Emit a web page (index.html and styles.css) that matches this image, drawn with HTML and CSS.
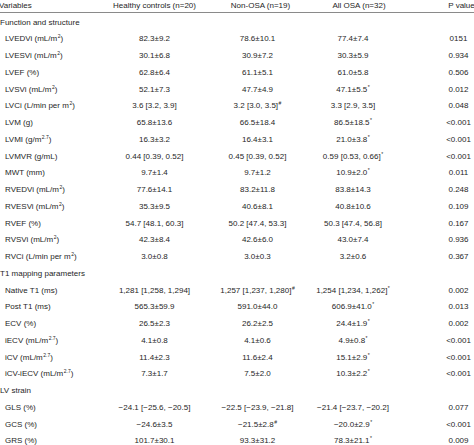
FILE: index.html
```html
<!DOCTYPE html>
<html>
<head>
<meta charset="utf-8">
<link rel="stylesheet" href="styles.css">
</head>
<body>
<div class="table">
  <div class="head">
    <div class="c lab var">Variables</div>
    <div class="c h1">Healthy controls (n=20)</div>
    <div class="c h2">Non-OSA (n=19)</div>
    <div class="c h3">All OSA (n=32)</div>
    <div class="c h4">P value</div>
  </div>
  <div class="rows">
    <div class="sec">Function and structure</div>
    <div class="row"><div class="c lab">LVEDVi (mL/m<sup>2</sup>)</div><div class="c">82.3±9.2</div><div class="c">78.6±10.1</div><div class="c">77.4±7.4</div><div class="c">0151</div></div>
    <div class="row"><div class="c lab">LVESVi (mL/m<sup>2</sup>)</div><div class="c">30.1±6.8</div><div class="c">30.9±7.2</div><div class="c">30.3±5.9</div><div class="c">0.934</div></div>
    <div class="row"><div class="c lab">LVEF (%)</div><div class="c">62.8±6.4</div><div class="c">61.1±5.1</div><div class="c">61.0±5.8</div><div class="c">0.506</div></div>
    <div class="row"><div class="c lab">LVSVi (mL/m<sup>2</sup>)</div><div class="c">52.1±7.3</div><div class="c">47.7±4.9</div><div class="c">47.1±5.5<sup>*</sup></div><div class="c">0.012</div></div>
    <div class="row"><div class="c lab">LVCi (L/min per m<sup>2</sup>)</div><div class="c">3.6 [3.2, 3.9]</div><div class="c">3.2 [3.0, 3.5]<sup>#</sup></div><div class="c">3.3 [2.9, 3.5]</div><div class="c">0.048</div></div>
    <div class="row"><div class="c lab">LVM (g)</div><div class="c">65.8±13.6</div><div class="c">66.5±18.4</div><div class="c">86.5±18.5<sup>*</sup></div><div class="c">&lt;0.001</div></div>
    <div class="row"><div class="c lab">LVMI (g/m<sup>2.7</sup>)</div><div class="c">16.3±3.2</div><div class="c">16.4±3.1</div><div class="c">21.0±3.8<sup>*</sup></div><div class="c">&lt;0.001</div></div>
    <div class="row"><div class="c lab">LVMVR (g/mL)</div><div class="c">0.44 [0.39, 0.52]</div><div class="c">0.45 [0.39, 0.52]</div><div class="c">0.59 [0.53, 0.66]<sup>*</sup></div><div class="c">&lt;0.001</div></div>
    <div class="row"><div class="c lab">MWT (mm)</div><div class="c">9.7±1.4</div><div class="c">9.7±1.2</div><div class="c">10.9±2.0<sup>*</sup></div><div class="c">0.011</div></div>
    <div class="row"><div class="c lab">RVEDVi (mL/m<sup>2</sup>)</div><div class="c">77.6±14.1</div><div class="c">83.2±11.8</div><div class="c">83.8±14.3</div><div class="c">0.248</div></div>
    <div class="row"><div class="c lab">RVESVi (mL/m<sup>2</sup>)</div><div class="c">35.3±9.5</div><div class="c">40.6±8.1</div><div class="c">40.8±10.6</div><div class="c">0.109</div></div>
    <div class="row"><div class="c lab">RVEF (%)</div><div class="c">54.7 [48.1, 60.3]</div><div class="c">50.2 [47.4, 53.3]</div><div class="c">50.3 [47.4, 56.8]</div><div class="c">0.167</div></div>
    <div class="row"><div class="c lab">RVSVi (mL/m<sup>2</sup>)</div><div class="c">42.3±8.4</div><div class="c">42.6±6.0</div><div class="c">43.0±7.4</div><div class="c">0.936</div></div>
    <div class="row"><div class="c lab">RVCi (L/min per m<sup>2</sup>)</div><div class="c">3.0±0.8</div><div class="c">3.0±0.3</div><div class="c">3.2±0.6</div><div class="c">0.367</div></div>
    <div class="sec">T1 mapping parameters</div>
    <div class="row"><div class="c lab">Native T1 (ms)</div><div class="c">1,281 [1,258, 1,294]</div><div class="c">1,257 [1,237, 1,280]<sup>#</sup></div><div class="c">1,254 [1,234, 1,262]<sup>*</sup></div><div class="c">0.002</div></div>
    <div class="row"><div class="c lab">Post T1 (ms)</div><div class="c">565.3±59.9</div><div class="c">591.0±44.0</div><div class="c">606.9±41.0<sup>*</sup></div><div class="c">0.013</div></div>
    <div class="row"><div class="c lab">ECV (%)</div><div class="c">26.5±2.3</div><div class="c">26.2±2.5</div><div class="c">24.4±1.9<sup>*</sup></div><div class="c">0.002</div></div>
    <div class="row"><div class="c lab">iECV (mL/m<sup>2.7</sup>)</div><div class="c">4.1±0.8</div><div class="c">4.1±0.6</div><div class="c">4.9±0.8<sup>*</sup></div><div class="c">&lt;0.001</div></div>
    <div class="row"><div class="c lab">iCV (mL/m<sup>2.7</sup>)</div><div class="c">11.4±2.3</div><div class="c">11.6±2.4</div><div class="c">15.1±2.9<sup>*</sup></div><div class="c">&lt;0.001</div></div>
    <div class="row"><div class="c lab">iCV-iECV (mL/m<sup>2.7</sup>)</div><div class="c">7.3±1.7</div><div class="c">7.5±2.0</div><div class="c">10.3±2.2<sup>*</sup></div><div class="c">&lt;0.001</div></div>
    <div class="sec">LV strain</div>
    <div class="row"><div class="c lab">GLS (%)</div><div class="c">−24.1 [−25.6, −20.5]</div><div class="c">−22.5 [−23.9, −21.8]</div><div class="c">−21.4 [−23.7, −20.2]</div><div class="c">0.077</div></div>
    <div class="row"><div class="c lab">GCS (%)</div><div class="c">−24.6±3.5</div><div class="c">−21.5±2.8<sup>#</sup></div><div class="c">−20.0±2.9<sup>*</sup></div><div class="c">&lt;0.001</div></div>
    <div class="row"><div class="c lab">GRS (%)</div><div class="c">101.7±30.1</div><div class="c">93.3±31.2</div><div class="c">78.3±21.1<sup>*</sup></div><div class="c">0.009</div></div>
  </div>
</div>
</body>
</html>
```

FILE: styles.css
```css
html, body {
  margin: 0;
  padding: 0;
  background: #ffffff;
  overflow: hidden;
}
body {
  width: 474px;
  height: 445px;
  font-family: "Liberation Sans", Arial, sans-serif;
  font-size: 8px;
  color: #262626;
}
.table {
  width: 526px;
}
.head,
.row {
  display: grid;
  grid-template-columns: 109px 91px 115px 76px 135px;
  white-space: nowrap;
}
.head {
  height: 12px;
  line-height: 11px;
  border-bottom: 1px solid #8a8a8a;
}
.rows {
  padding-top: 1.6px;
}
.row,
.sec {
  height: 16.76px;
  line-height: 16.76px;
}
.c {
  display: block;
  text-align: center;
  white-space: nowrap;
  margin: 0 -20px;
}
.c.lab {
  text-align: left;
  margin: 0;
  padding-left: 5px;
}
.c.var {
  padding-left: 0;
  margin-left: -1px;
}
.sec {
  padding-left: 0;
  white-space: nowrap;
}
.h2 { padding-left: 6px; }
.h3 { padding-left: 12px; }
.h4 { padding-left: 6px; }
sup {
  font-size: 5px;
  line-height: 0;
  vertical-align: 3px;
  margin-left: 0.5px;
}
```
